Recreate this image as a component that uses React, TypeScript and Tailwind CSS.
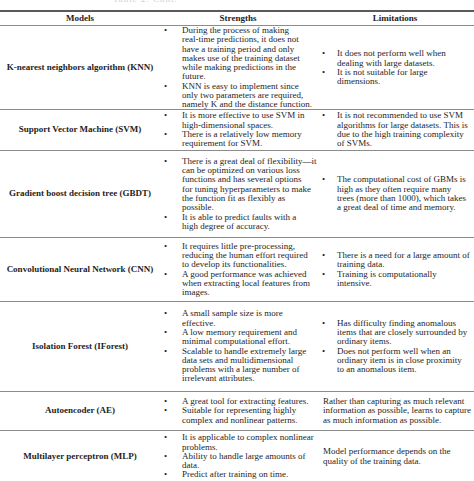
import React from "react";

type Row = {
  model: string;
  h: string;
  strengths: string[][];
  limits: string[][];
  plainLimits?: boolean;
};

const ROWS: Row[] = [
  {
    model: "K-nearest neighbors algorithm (KNN)",
    h: "h-[84px]",
    strengths: [
      [
        "During the process of making",
        "real-time predictions, it does not",
        "have a training period and only",
        "makes use of the training dataset",
        "while making predictions in the",
        "future.",
      ],
      ["KNN is easy to implement since", "only two parameters are required,", "namely K and the distance function."],
    ],
    limits: [
      ["It does not perform well when", "dealing with large datasets."],
      ["It is not suitable for large", "dimensions."],
    ],
  },
  {
    model: "Support Vector Machine (SVM)",
    h: "h-[41px]",
    strengths: [
      ["It is more effective to use SVM in", "high-dimensional spaces."],
      ["There is a relatively low memory", "requirement for SVM."],
    ],
    limits: [
      [
        "It is not recommended to use SVM",
        "algorithms for large datasets. This is",
        "due to the high training complexity",
        "of SVMs.",
      ],
    ],
  },
  {
    model: "Gradient boost decision tree (GBDT)",
    h: "h-[87px]",
    strengths: [
      [
        "There is a great deal of flexibility\u2014it",
        "can be optimized on various loss",
        "functions and has several options",
        "for tuning hyperparameters to make",
        "the function fit as flexibly as",
        "possible.",
      ],
      ["It is able to predict faults with a", "high degree of accuracy."],
    ],
    limits: [
      [
        "The computational cost of GBMs is",
        "high as they often require many",
        "trees (more than 1000), which takes",
        "a great deal of time and memory.",
      ],
    ],
  },
  {
    model: "Convolutional Neural Network (CNN)",
    h: "h-[64px]",
    strengths: [
      ["It requires little pre-processing,", "reducing the human effort required", "to develop its functionalities."],
      ["A good performance was achieved", "when extracting local features from", "images."],
    ],
    limits: [
      ["There is a need for a large amount of", "training data."],
      ["Training is computationally", "intensive."],
    ],
  },
  {
    model: "Isolation Forest (IForest)",
    h: "h-[90px]",
    strengths: [
      ["A small sample size is more", "effective."],
      ["A low memory requirement and", "minimal computational effort."],
      [
        "Scalable to handle extremely large",
        "data sets and multidimensional",
        "problems with a large number of",
        "irrelevant attributes.",
      ],
    ],
    limits: [
      ["Has difficulty finding anomalous", "items that are closely surrounded by", "ordinary items."],
      ["Does not perform well when an", "ordinary item is in close proximity", "to an anomalous item."],
    ],
  },
  {
    model: "Autoencoder (AE)",
    h: "h-[39px]",
    strengths: [
      ["A great tool for extracting features."],
      ["Suitable for representing highly", "complex and nonlinear patterns."],
    ],
    limits: [
      [
        "Rather than capturing as much relevant",
        "information as possible, learns to capture",
        "as much information as possible.",
      ],
    ],
    plainLimits: true,
  },
  {
    model: "Multilayer perceptron (MLP)",
    h: "h-[52px]",
    strengths: [
      ["It is applicable to complex nonlinear", "problems."],
      ["Ability to handle large amounts of", "data."],
      ["Predict after training on time."],
    ],
    limits: [["Model performance depends on the", "quality of the training data."]],
    plainLimits: true,
  },
];

function Lines({ lines }: { lines: string[] }) {
  return (
    <div className="flex flex-col">
      {lines.map((l, i) => (
        <span key={i} className="whitespace-nowrap">
          {l}
        </span>
      ))}
    </div>
  );
}

function Bullets({ items, bulletW }: { items: string[][]; bulletW: string }) {
  return (
    <div className="flex flex-col">
      {items.map((lines, i) => (
        <div key={i} className="flex">
          <span className={`${bulletW} shrink-0`}>•</span>
          <Lines lines={lines} />
        </div>
      ))}
    </div>
  );
}

export default function App() {
  return (
    <div
      className="w-[474px] h-[481px] overflow-hidden bg-white text-[#1e1e1e] text-[9px] leading-[9.3px]"
      style={{ fontFamily: '"Liberation Serif", "Times New Roman", serif' }}
    >
      {/* clipped caption from the page above */}
      <div className="h-[10px] overflow-hidden pl-[113px]">
        <div className="mt-[-6px] text-[9px] leading-[10px] text-[#d0d0d0] tracking-[1px]">Table 2. Cont.</div>
      </div>

      <div className="border-t-2 border-[#5a5a5a]">
        <div className="grid grid-cols-[160px_156px_158px] h-[14px] items-center border-b border-[#8c8c8c] font-bold">
          <div className="text-center">Models</div>
          <div className="text-center">Strengths</div>
          <div className="text-center">Limitations</div>
        </div>

        {ROWS.map((row) => (
          <div
            key={row.model}
            className={`grid grid-cols-[160px_156px_158px] items-center border-b border-[#8c8c8c] ${row.h}`}
          >
            <div className="text-center font-bold">{row.model}</div>
            <div className="pl-[4px]">
              <Bullets items={row.strengths} bulletW="w-[18px]" />
            </div>
            <div className="pl-[6px]">
              {row.plainLimits ? (
                <div className="pl-[1px]">
                  <Lines lines={row.limits[0]} />
                </div>
              ) : (
                <Bullets items={row.limits} bulletW="w-[15px]" />
              )}
            </div>
          </div>
        ))}
      </div>
    </div>
  );
}
